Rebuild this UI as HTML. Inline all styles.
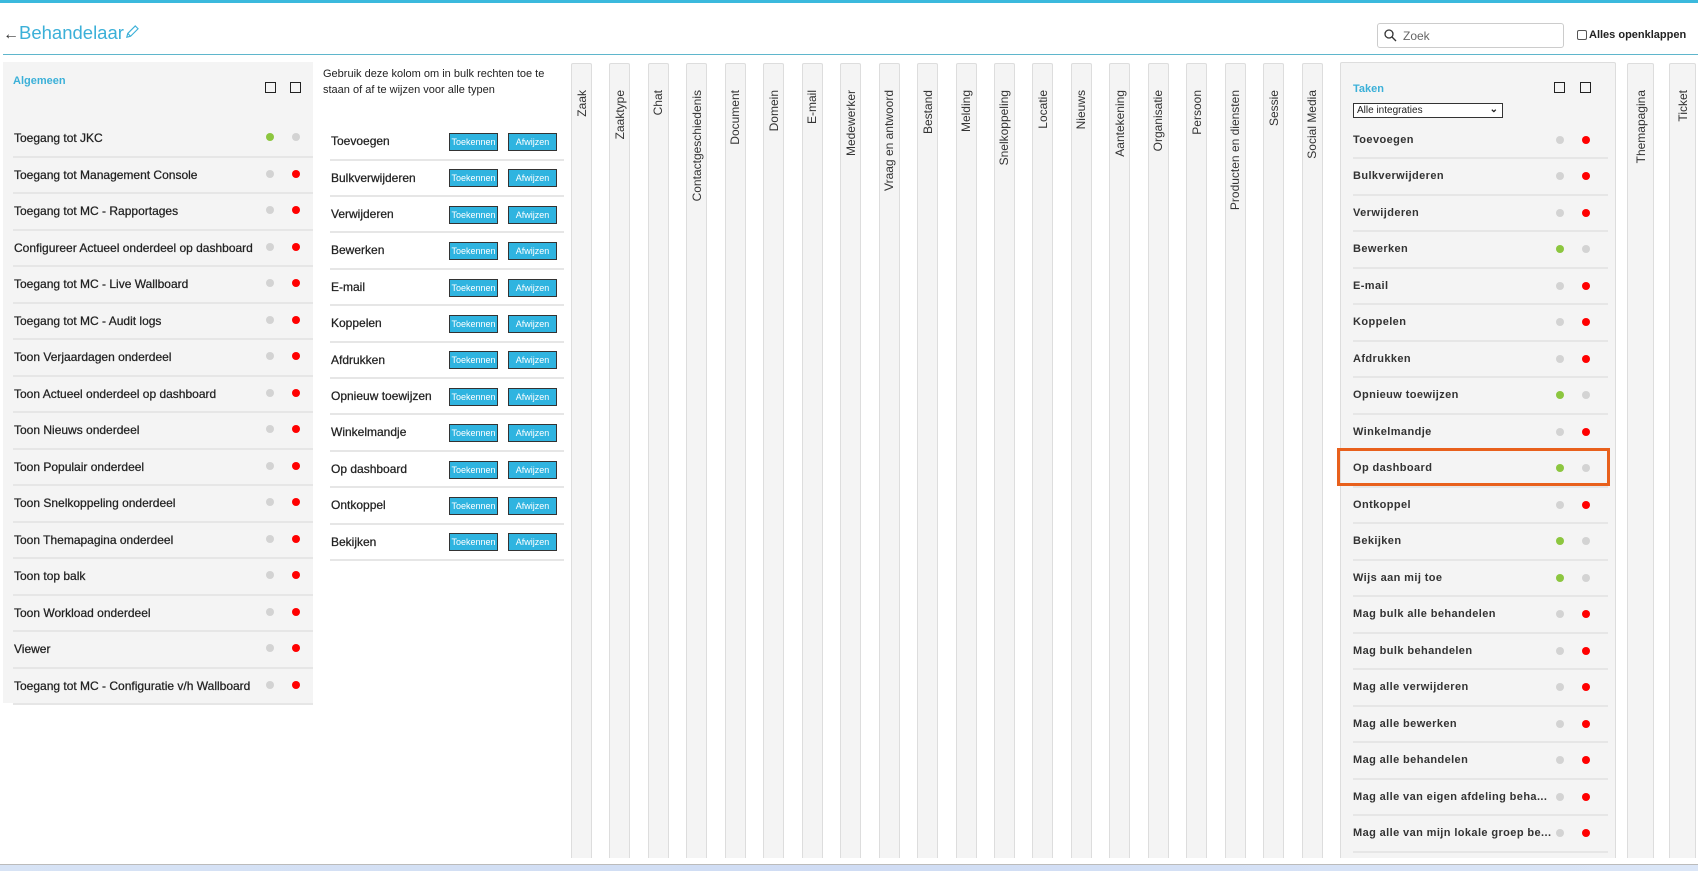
<!DOCTYPE html>
<html><head><meta charset="utf-8"><style>
*{margin:0;padding:0;box-sizing:border-box}
body{width:1698px;height:871px;position:relative;overflow:hidden;background:#fff;font-family:"Liberation Sans",Arial,sans-serif;color:#222}
.a{position:absolute}
.dot{position:absolute;width:8px;height:8px;border-radius:50%}
.g{background:#d3d3d3}.gr{background:#8cc63f}.r{background:#f00}
.cb{position:absolute;width:11px;height:11px;border:1px solid #222;background:#f4f4f4}
.row{position:absolute;height:36.5px;border-bottom:2px solid #e6e6e6;font-size:12px;display:flex;align-items:center;-webkit-text-stroke:0.25px #222}
.tab{position:absolute;top:63px;width:21px;height:795px;background:#f4f4f4;border:1px solid #ddd;border-bottom:none;border-radius:2px 2px 0 0}
.tab span{position:absolute;left:50%;top:26px;transform-origin:0 0;transform:rotate(-90deg) translate(-100%,-50%);white-space:nowrap;font-size:12px;color:#333}
.btn{position:absolute;width:49px;height:18px;background:#2fb4e0;border:1px solid #333;color:#fff;font-size:9px;text-align:center;line-height:16px}
.tk{font-weight:bold;font-size:11px;letter-spacing:.4px;color:#333;-webkit-text-stroke:0}
</style></head><body>
<div class="a" style="left:0;top:0;width:1698px;height:3px;background:#3bb9dd"></div>
<div class="a" style="left:3px;top:22px;font-size:18.5px;color:#3bb0d8"><span style="color:#333;font-size:16px">&#8592;</span>Behandelaar<svg width="15" height="15" viewBox="0 0 16 16" style="vertical-align:-1px"><path d="M3 13l1-4 8-8 3 3-8 8z M4 9l3 3" fill="none" stroke="#3bb0d8" stroke-width="1.2"/></svg></div>
<div class="a" style="left:3px;top:54px;width:1695px;height:1px;background:#5fb6cc"></div>
<div class="a" style="left:1377px;top:23px;width:187px;height:25px;border:1px solid #ccc;border-radius:3px;font-size:12px;color:#666;padding:5px 0 0 25px">Zoek<svg class="a" style="left:6px;top:5px" width="13" height="13" viewBox="0 0 13 13"><circle cx="5" cy="5" r="4" fill="none" stroke="#333" stroke-width="1.3"/><path d="M8 8l4 4" stroke="#333" stroke-width="1.3"/></svg></div>
<div class="a" style="left:1577px;top:30px;width:10px;height:10px;border:1px solid #555;border-radius:2px"></div>
<div class="a" style="left:1589px;top:29px;font-size:11px;font-weight:bold;color:#222">Alles openklappen</div>

<div class="a" style="left:3px;top:62px;width:310px;height:641px;background:#f4f4f4"></div>
<div class="a" style="left:13px;top:75px;font-size:11px;font-weight:bold;color:#3bb0d8">Algemeen</div>
<div class="cb" style="left:265px;top:82px"></div><div class="cb" style="left:290px;top:82px"></div>
<div id="left"></div>

<div class="a" style="left:323px;top:66px;font-size:11px;line-height:16px;color:#222">Gebruik deze kolom om in bulk rechten toe te<br>staan of af te wijzen voor alle typen</div>
<div id="bulk"></div>

<div id="tabs"></div>

<div class="a" style="left:1340px;top:62px;width:276px;height:796px;background:#f4f4f4;border:1px solid #ddd;border-bottom:none;border-radius:2px 2px 0 0"></div>
<div class="a" style="left:1353px;top:83px;font-size:11px;font-weight:bold;color:#3bb0d8">Taken</div>
<div class="cb" style="left:1554px;top:82px"></div><div class="cb" style="left:1580px;top:82px"></div>
<div class="a" style="left:1353px;top:103px;width:150px;height:15px;border:1px solid #333;background:#fff;font-size:10px;padding:0 3px;line-height:13px">Alle integraties<span style="position:absolute;right:4px;top:-1px;font-weight:bold;font-size:10px">&#8964;</span></div>
<div id="taken"></div>
<div class="a" style="left:1337px;top:448px;width:273px;height:38px;border:3px solid #e8601c"></div>

<div class="tab" style="left:1627px;width:27px"><span>Themapagina</span></div>
<div class="tab" style="left:1669px;width:27px"><span>Ticket</span></div>

<div class="a" style="left:0;top:864px;width:1698px;height:7px;background:linear-gradient(90deg,#d7e3f5,#cfdcf4,#dbe6f7);border-top:1px solid #bbb"></div>

<script>
var L=[["Toegang tot JKC",1],["Toegang tot Management Console"],["Toegang tot MC - Rapportages"],["Configureer Actueel onderdeel op dashboard"],["Toegang tot MC - Live Wallboard"],["Toegang tot MC - Audit logs"],["Toon Verjaardagen onderdeel"],["Toon Actueel onderdeel op dashboard"],["Toon Nieuws onderdeel"],["Toon Populair onderdeel"],["Toon Snelkoppeling onderdeel"],["Toon Themapagina onderdeel"],["Toon top balk"],["Toon Workload onderdeel"],["Viewer"],["Toegang tot MC - Configuratie v/h Wallboard"]];
var h="";
L.forEach(function(e,i){var c=139+i*36.5;
h+='<div class="row" style="left:13px;top:'+(c-18)+'px;width:300px;padding-left:1px">'+e[0]+'</div>';
h+='<div class="dot '+(e[1]?'gr':'g')+'" style="left:266px;top:'+(c-6)+'px"></div><div class="dot '+(e[1]?'g':'r')+'" style="left:292px;top:'+(c-6)+'px"></div>';});
document.getElementById('left').innerHTML=h;
var B=["Toevoegen","Bulkverwijderen","Verwijderen","Bewerken","E-mail","Koppelen","Afdrukken","Opnieuw toewijzen","Winkelmandje","Op dashboard","Ontkoppel","Bekijken"];
h="";B.forEach(function(e,i){var c=142+i*36.4;
h+='<div class="row" style="left:330px;top:'+(c-18)+'px;width:234px;padding-left:1px">'+e+'</div>';
h+='<div class="btn" style="left:449px;top:'+(c-9)+'px">Toekennen</div><div class="btn" style="left:508px;top:'+(c-9)+'px">Afwijzen</div>';});
document.getElementById('bulk').innerHTML=h;
h="";
var T=["Zaak","Zaaktype","Chat","Contactgeschiedenis","Document","Domein","E-mail","Medewerker","Vraag en antwoord","Bestand","Melding","Snelkoppeling","Locatie","Nieuws","Aantekening","Organisatie","Persoon","Producten en diensten","Sessie","Social Media"];
T.forEach(function(e,i){h+='<div class="tab" style="left:'+(571+i*38.45)+'px"><span>'+e+'</span></div>';});
document.getElementById('tabs').innerHTML=h;
var K=[["Toevoegen"],["Bulkverwijderen"],["Verwijderen"],["Bewerken",1],["E-mail"],["Koppelen"],["Afdrukken"],["Opnieuw toewijzen",1],["Winkelmandje"],["Op dashboard",1],["Ontkoppel"],["Bekijken",1],["Wijs aan mij toe",1],["Mag bulk alle behandelen"],["Mag bulk behandelen"],["Mag alle verwijderen"],["Mag alle bewerken"],["Mag alle behandelen"],["Mag alle van eigen afdeling beha..."],["Mag alle van mijn lokale groep be..."]];
h="";K.forEach(function(e,i){var c=140.5+i*36.5;
h+='<div class="row tk" style="left:1353px;top:'+(c-18)+'px;width:255px">'+e[0]+'</div>';
h+='<div class="dot '+(e[1]?'gr':'g')+'" style="left:1556px;top:'+(c-5)+'px"></div><div class="dot '+(e[1]?'g':'r')+'" style="left:1582px;top:'+(c-5)+'px"></div>';});
document.getElementById('taken').innerHTML=h;
</script>
</body></html>
